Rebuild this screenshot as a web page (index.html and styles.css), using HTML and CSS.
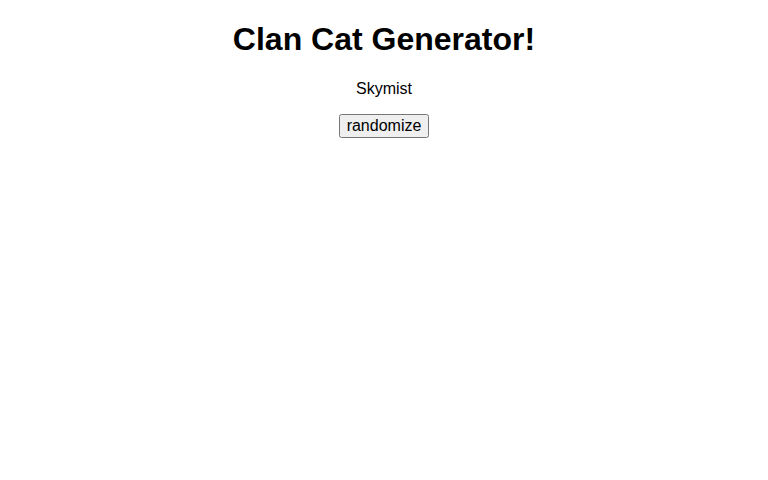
FILE: index.html
```html
<!DOCTYPE html>
<html lang="en">
<head>
    <meta charset="UTF-8">
    <meta name="viewport" content="width=device-width, initial-scale=1.0">
    <title>Clan Cat Generator!</title>
    <link rel="stylesheet" href="styles.css">
</head>
<body>

    <div class="container">
        <h1>Clan Cat Generator!</h1>
        <p id="catName">Skymist</p>
        <button id="randomize">randomize</button>
    </div>

</body>
</html>
```

FILE: styles.css
```css
body {
    font-family: "Liberation Sans", Arial, sans-serif;
    margin: 0;
}

.container {
    text-align: center;
}

h1 {
    font-size: 32px;
}

button {
    font-family: "Liberation Sans", Arial, sans-serif;
    font-size: 16px;
}
```
